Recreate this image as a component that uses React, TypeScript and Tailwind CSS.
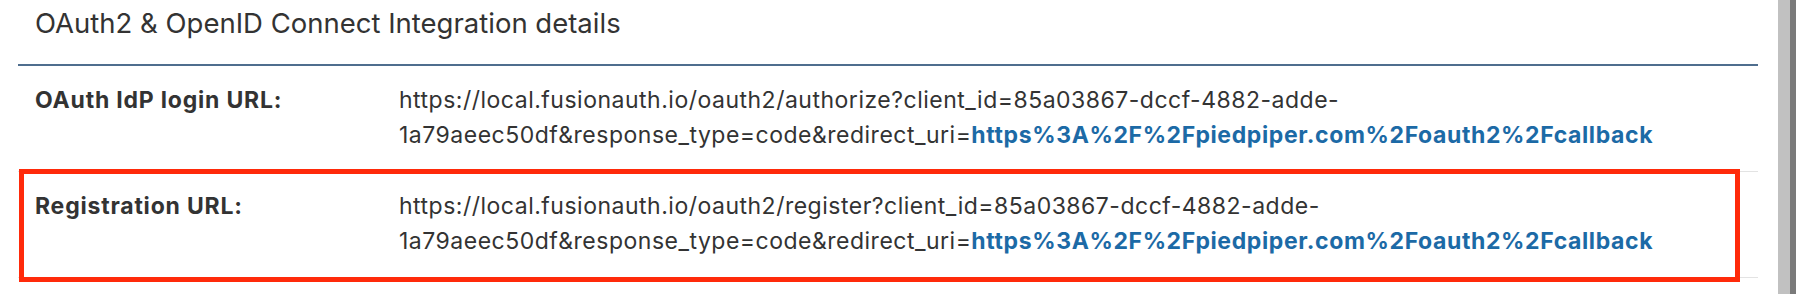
const CLIENT_ID = "85a03867-dccf-4882-adde-1a79aeec50df";
const REDIRECT = "https%3A%2F%2Fpiedpiper.com%2Foauth2%2Fcallback";

const ROWS = [
  {
    label: "OAuth IdP login URL:",
    path: "authorize",
    highlight: false,
  },
  {
    label: "Registration URL:",
    path: "register",
    highlight: true,
  },
];

function UrlRow({
  label,
  path,
  highlight,
}: {
  label: string;
  path: string;
  highlight: boolean;
}) {
  const base = `https://local.fusionauth.io/oauth2/${path}?client_id=${CLIENT_ID}&response_type=code&redirect_uri=`;

  return (
    <div className="relative flex border-b border-[#e3e3e3] px-[17px] pt-[17px] pb-[18px] text-[23px] leading-[35px] text-[#333]">
      <div className="w-[364px] shrink-0 font-bold tracking-[0.8px]">
        {label}
      </div>
      <div className="min-w-0 flex-1 tracking-[0.5px]">
        {base}
        <a className="font-bold tracking-[0.62px] text-[#1c6aa6]">{REDIRECT}</a>
      </div>

      {/* annotation box */}
      {highlight && (
        <div className="pointer-events-none absolute top-[-3px] right-[18px] bottom-[-5px] left-[1px] border-[5px] border-[#ff2a0a]" />
      )}
    </div>
  );
}

export default function App() {
  return (
    <div
      className="flex h-[294px] w-full overflow-hidden bg-white"
      style={{ fontFamily: "Inter, 'Noto Sans', sans-serif" }}
    >
      <div className="flex-1">
        <div className="ml-[18px] w-[1740px]">
          {/* Header */}
          <h1 className="px-[17px] pt-[6px] text-[27.5px] leading-[34px] font-normal text-[#333]">
            OAuth2 &amp; OpenID Connect Integration details
          </h1>
          <div className="mt-[24px] h-[2px] bg-[#4f6e8e]" />

          {/* Rows */}
          {ROWS.map((r) => (
            <UrlRow key={r.path} {...r} />
          ))}
        </div>
      </div>

      {/* Scrollbar */}
      <div className="flex w-[18px] shrink-0">
        <div className="w-[12px] bg-[#c1c1c1]" />
        <div className="w-[6px] bg-[#7a7a7a]" />
      </div>
    </div>
  );
}
